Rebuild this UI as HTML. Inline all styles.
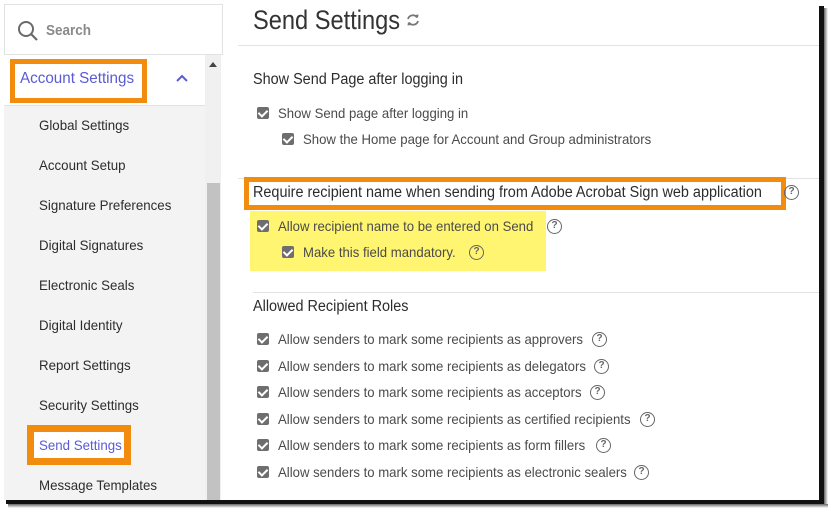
<!DOCTYPE html>
<html><head><style>
*{margin:0;padding:0;box-sizing:border-box}
body{width:828px;height:508px;background:#fff;position:relative;overflow:hidden;font-family:"Liberation Sans",sans-serif;}
.a{position:absolute;white-space:nowrap;transform-origin:0 0}
.nav{font-size:14px;color:#2c2c2c;left:39px;transform:scaleX(0.95)}
.cb{position:absolute;width:12px;height:12px;background:#6e6e6e;border-radius:2px}
.cb:after{content:"";position:absolute;left:3px;top:1px;width:4px;height:7px;border:solid #fff;border-width:0 2px 2px 0;transform:rotate(45deg)}
.t{font-size:14px;color:#4b4b4b;transform:scaleX(0.94)}
.q{position:absolute;width:15px;height:15px;border:1.6px solid #666;border-radius:50%;font-size:10px;font-weight:bold;color:#666;text-align:center;line-height:12px}
.h{font-size:15.5px;color:#2c2c2c;transform:scaleX(0.93)}
</style></head><body>
<div class="a" style="left:819px;top:6px;width:5px;height:498px;background:#111"></div>
<div class="a" style="left:824px;top:8px;width:4px;height:498px;background:linear-gradient(90deg,#666,#fff)"></div>
<div class="a" style="left:6px;top:500px;width:818px;height:4px;background:#111"></div>
<div class="a" style="left:8px;top:504px;width:820px;height:4px;background:linear-gradient(180deg,#666,#fff)"></div>

<div class="a" style="left:4px;top:4px;width:219px;height:51px;border:1px solid #e2e2e2;background:#fff"></div>
<svg class="a" style="left:17px;top:20px" width="22" height="22"><circle cx="9" cy="9" r="7" fill="none" stroke="#6a6a6a" stroke-width="2"/><line x1="14" y1="14" x2="20" y2="20" stroke="#6a6a6a" stroke-width="2.2"/></svg>
<div class="a" style="left:46px;top:22px;font-size:15px;font-weight:bold;color:#8a8a8a;transform:scaleX(0.9)">Search</div>
<div class="a" style="left:4px;top:105px;width:201px;height:395px;background:#f3f3f3"></div>
<div class="a" style="left:4px;top:105px;width:201px;height:1px;background:#e2e2e2"></div>
<div class="a" style="left:205px;top:55px;width:16px;height:445px;background:#f0f0f0"></div>
<div class="a" style="left:207px;top:183px;width:13px;height:317px;background:#c2c2c2"></div>
<div class="a" style="left:209px;top:62px;width:0;height:0;border-left:4px solid transparent;border-right:4px solid transparent;border-bottom:5px solid #444"></div>
<div class="a" style="left:10px;top:59px;width:137px;height:44px;border:5px solid #f28c0f;background:#fff"></div>
<div class="a" style="left:20px;top:70px;font-size:16px;color:#5a5ad6;transform:scaleX(0.95)">Account Settings</div>
<svg class="a" style="left:176px;top:74px" width="12" height="8"><path d="M1 7 L6 2 L11 7" fill="none" stroke="#5a5ad6" stroke-width="2"/></svg>
<div class="a nav" style="top:117px">Global Settings</div>
<div class="a nav" style="top:157px">Account Setup</div>
<div class="a nav" style="top:197px">Signature Preferences</div>
<div class="a nav" style="top:237px">Digital Signatures</div>
<div class="a nav" style="top:277px">Electronic Seals</div>
<div class="a nav" style="top:317px">Digital Identity</div>
<div class="a nav" style="top:357px">Report Settings</div>
<div class="a nav" style="top:397px">Security Settings</div>
<div class="a" style="left:27px;top:425px;width:104px;height:40px;border:7px solid #f28c0f;background:#fff"></div>
<div class="a nav" style="top:437px;color:#5a5ad6">Send Settings</div>
<div class="a nav" style="top:477px">Message Templates</div>

<div class="a" style="left:253px;top:5px;font-size:27px;color:#333;transform:scaleX(0.875)">Send Settings</div>
<svg class="a" style="left:405px;top:12px" width="16" height="16"><path d="M3 7 A5 5 0 0 1 12 5.5 M13 9 A5 5 0 0 1 4 10.5" fill="none" stroke="#777" stroke-width="1.8"/><path d="M10 3 L13 6 L13.5 2.5Z M6 13 L3 10 L2.5 13.5Z" fill="#777"/></svg>
<div class="a" style="left:238px;top:45px;width:581px;height:1px;background:#e3e3e3"></div>
<div class="a h" style="left:253px;top:71px">Show Send Page after logging in</div>
<div class="cb" style="left:257px;top:107px"></div><div class="a t" style="left:278px;top:105px">Show Send page after logging in</div>
<div class="cb" style="left:282px;top:133px"></div><div class="a t" style="left:303px;top:131px">Show the Home page for Account and Group administrators</div>
<div class="a" style="left:238px;top:178px;width:581px;height:1px;background:#e3e3e3"></div>
<div class="a" style="left:244px;top:177px;width:542px;height:33px;border:5px solid #f28c0f;background:#fff"></div>
<div class="a h" style="left:253px;top:184px">Require recipient name when sending from Adobe Acrobat Sign web application</div>
<div class="q" style="left:784px;top:185px">?</div>
<div class="a" style="left:250px;top:211px;width:296px;height:60px;background:#fff570"></div>
<div class="cb" style="left:257px;top:220px"></div><div class="a t" style="left:278px;top:218px">Allow recipient name to be entered on Send</div>
<div class="q" style="left:547px;top:219px">?</div>
<div class="cb" style="left:282px;top:246px"></div><div class="a t" style="left:303px;top:244px">Make this field mandatory.</div>
<div class="q" style="left:469px;top:245px">?</div>
<div class="a" style="left:253px;top:292px;width:566px;height:1px;background:#e3e3e3"></div>
<div class="a h" style="left:253px;top:298px">Allowed Recipient Roles</div>
<div class="cb" style="left:257px;top:333px"></div><div class="a t" style="left:278px;top:331px">Allow senders to mark some recipients as approvers</div><div class="q" style="left:592px;top:332px">?</div>
<div class="cb" style="left:257px;top:360px"></div><div class="a t" style="left:278px;top:358px">Allow senders to mark some recipients as delegators</div><div class="q" style="left:594px;top:359px">?</div>
<div class="cb" style="left:257px;top:386px"></div><div class="a t" style="left:278px;top:384px">Allow senders to mark some recipients as acceptors</div><div class="q" style="left:590px;top:385px">?</div>
<div class="cb" style="left:257px;top:413px"></div><div class="a t" style="left:278px;top:411px">Allow senders to mark some recipients as certified recipients</div><div class="q" style="left:640px;top:412px">?</div>
<div class="cb" style="left:257px;top:439px"></div><div class="a t" style="left:278px;top:437px">Allow senders to mark some recipients as form fillers</div><div class="q" style="left:596px;top:438px">?</div>
<div class="cb" style="left:257px;top:466px"></div><div class="a t" style="left:278px;top:464px">Allow senders to mark some recipients as electronic sealers</div><div class="q" style="left:634px;top:465px">?</div>
</body></html>
